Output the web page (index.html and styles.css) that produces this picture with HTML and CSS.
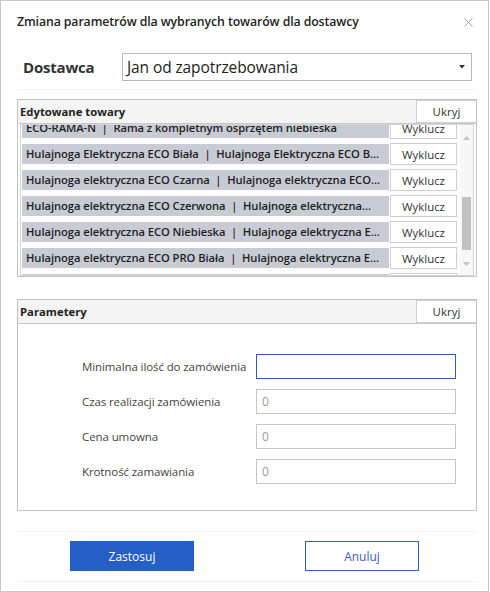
FILE: index.html
```html
<!DOCTYPE html>
<html lang="pl">
<head>
<meta charset="utf-8">
<title>Zmiana parametrów</title>
<link rel="stylesheet" href="styles.css">
</head>
<body>
<div class="dialog">
  <div class="dlg-head">
    <div class="dlg-title">Zmiana parametrów dla wybranych towarów dla dostawcy</div>
    <svg class="close" width="9" height="9" viewBox="0 0 9 9"><path d="M0.5 0.5L8.5 8.5M8.5 0.5L0.5 8.5" stroke="#a0a0a0" stroke-width="1" fill="none"/></svg>
  </div>

  <div class="supplier">
    <div class="supplier-label">Dostawca</div>
    <div class="select">
      <span class="select-text">Jan od zapotrzebowania</span>
      <svg class="caret" width="6" height="4" viewBox="0 0 6 4"><path d="M0 0H6L3 3.5Z" fill="#333"/></svg>
    </div>
  </div>

  <div class="sep sep-top"></div>

  <div class="panel panel-items">
    <div class="panel-head">
      <div class="panel-title">Edytowane towary</div>
      <div class="hide-btn">Ukryj</div>
    </div>
    <div class="panel-body-list">
      <div class="list">
        <div class="rows">
          <div class="rows-inner">
            <div class="row"><div class="row-label">ECO-RAMA-N&nbsp; | &nbsp;Rama z kompletnym osprzętem niebieska</div><div class="row-btn">Wyklucz</div></div>
            <div class="row"><div class="row-label">Hulajnoga Elektryczna ECO Biała&nbsp; | &nbsp;Hulajnoga Elektryczna ECO B...</div><div class="row-btn">Wyklucz</div></div>
            <div class="row"><div class="row-label">Hulajnoga elektryczna ECO Czarna&nbsp; | &nbsp;Hulajnoga elektryczna ECO...</div><div class="row-btn">Wyklucz</div></div>
            <div class="row"><div class="row-label">Hulajnoga elektryczna ECO Czerwona&nbsp; | &nbsp;Hulajnoga elektryczna...</div><div class="row-btn">Wyklucz</div></div>
            <div class="row"><div class="row-label">Hulajnoga elektryczna ECO Niebieska&nbsp; | &nbsp;Hulajnoga elektryczna E...</div><div class="row-btn">Wyklucz</div></div>
            <div class="row"><div class="row-label">Hulajnoga elektryczna ECO PRO Biała&nbsp; | &nbsp;Hulajnoga elektryczna E...</div><div class="row-btn">Wyklucz</div></div>
            <div class="row"><div class="row-label">Hulajnoga elektryczna ECO PRO Czarna&nbsp; | &nbsp;Hulajnoga elektryczna E...</div><div class="row-btn">Wyklucz</div></div>
          </div>
        </div>
        <div class="vscroll">
          <svg class="arrow" width="7" height="4" viewBox="0 0 7 4"><path d="M3.5 0L7 4H0Z" fill="#c4c4c4"/></svg>
          <div class="track"><div class="thumb"></div></div>
          <svg class="arrow" width="7" height="4" viewBox="0 0 7 4"><path d="M0 0H7L3.5 4Z" fill="#c4c4c4"/></svg>
        </div>
      </div>
    </div>
  </div>

  <div class="panel panel-params">
    <div class="panel-head">
      <div class="panel-title">Parametery</div>
      <div class="hide-btn">Ukryj</div>
    </div>
    <div class="params">
      <div class="param"><label class="param-label">Minimalna ilość do zamówienia</label><div class="input input-focus"></div></div>
      <div class="param"><label class="param-label">Czas realizacji zamówienia</label><div class="input"><span class="ph">0</span></div></div>
      <div class="param"><label class="param-label">Cena umowna</label><div class="input"><span class="ph">0</span></div></div>
      <div class="param"><label class="param-label">Krotność zamawiania</label><div class="input"><span class="ph">0</span></div></div>
    </div>
  </div>

  <div class="sep sep-bottom"></div>

  <div class="actions">
    <div class="btn btn-primary">Zastosuj</div>
    <div class="btn btn-secondary">Anuluj</div>
  </div>

  <div class="sep sep-last"></div>
</div>
</body>
</html>
```

FILE: styles.css
```css
* { box-sizing: border-box; }
html, body { margin: 0; padding: 0; background: #ffffff; }
body {
  font-family: "Open Sans", "Noto Sans", "DejaVu Sans", sans-serif;
  color: #333;
  width: 490px;
  height: 592px;
}
.dialog {
  width: 489px;
  height: 592px;
  border: 1px solid #c8c8c8;
  padding: 0 11px 0 16px;
  display: flex;
  flex-direction: column;
}
.dlg-head {
  height: 41px;
  display: flex;
  align-items: center;
  justify-content: space-between;
  padding-right: 4px;
}
.dlg-title {
  font-size: 12.3px;
  font-weight: 600;
  color: #222;
  letter-spacing: -0.1px;
}
.close { margin-top: 2px; }

.supplier {
  display: flex;
  align-items: center;
  margin-top: 11px;
  height: 28px;
}
.supplier-label {
  width: 105px;
  padding-left: 6px;
  font-size: 15px;
  font-weight: 700;
  color: #333;
  letter-spacing: -0.2px;
}
.select {
  width: 350px;
  height: 28px;
  border: 1px solid #b8b8b8;
  display: flex;
  align-items: center;
  justify-content: space-between;
  padding: 0 6px 0 4px;
}
.select-text {
  font-size: 15.5px;
  color: #222;
  letter-spacing: -0.1px;
}

.sep { height: 1px; background: #f2f2f2; width: 460px; }
.sep-top { margin-top: 8px; }

.panel {
  width: 460px;
  border: 1px solid #c2c2c2;
}
.panel-items { margin-top: 9px; height: 178px; }
.panel-head {
  height: 24px;
  background: #f4f4f4;
  border-bottom: 1px solid #c9c9c9;
  display: flex;
  align-items: stretch;
  justify-content: space-between;
}
.panel-title {
  padding-left: 2px;
  font-size: 11.3px;
  font-weight: 700;
  color: #222;
  display: flex;
  align-items: center;
}
.hide-btn {
  width: 60px;
  background: #fff;
  border: 1px solid #cfcfcf;
  border-right: none;
  font-size: 11.5px;
  color: #333;
  display: flex;
  align-items: center;
  justify-content: center;
}

.panel-body-list {
  padding: 0 2px;
  height: 152px;
}
.list {
  height: 152px;
  border: 1px solid #d6d6d6;
  display: flex;
}
.rows {
  flex: 1;
  overflow: hidden;
  padding: 0 3px 0 1px;
}
.rows-inner { margin-top: -8px; }
.row {
  display: flex;
  align-items: center;
  height: 22px;
  margin-bottom: 4px;
  gap: 1px;
}
.row-label {
  flex: 1;
  min-width: 0;
  height: 20px;
  background: #c9cbd4;
  font-size: 11.2px;
  font-weight: 600;
  color: #1e1e1e;
  padding: 0 3px 0 4px;
  line-height: 20px;
  white-space: nowrap;
  overflow: hidden;
  letter-spacing: -0.05px;
}
.row-btn {
  flex: none;
  width: 67px;
  height: 22px;
  border: 1px solid #cfcfcf;
  background: #fff;
  font-size: 11.4px;
  color: #333;
  display: flex;
  align-items: center;
  justify-content: center;
}
.vscroll {
  width: 13px;
  background: #f7f7f7;
  display: flex;
  flex-direction: column;
  align-items: center;
  padding: 11px 0 9px;
}
.arrow { flex: none; }
.track {
  flex: 1;
  width: 100%;
  padding: 0 2px;
  display: flex;
  flex-direction: column;
}
.thumb {
  margin-top: 57px;
  height: 53px;
  background: #c1c1c1;
}

.panel-params { margin-top: 22px; height: 212px; }
.params {
  padding: 30px 0 0 64px;
  display: flex;
  flex-direction: column;
  gap: 10px;
}
.param {
  display: flex;
  align-items: center;
  height: 25px;
}
.param-label {
  width: 174px;
  font-size: 11.5px;
  color: #444;
  letter-spacing: -0.1px;
}
.input {
  width: 200px;
  height: 25px;
  border: 1px solid #c6c6c6;
  padding-left: 5px;
  display: flex;
  align-items: center;
}
.input-focus { border-color: #2c5dc6; }
.ph { font-size: 12px; color: #9a9a9a; }

.sep-bottom { margin-top: 20px; }
.actions {
  display: flex;
  margin-top: 9px;
  padding-left: 53px;
  gap: 111px;
  height: 30px;
}
.btn {
  height: 30px;
  display: flex;
  align-items: center;
  justify-content: center;
  font-size: 12px;
}
.btn-primary {
  width: 124px;
  background: #245ec7;
  color: #fff;
}
.btn-secondary {
  width: 114px;
  border: 1px solid #2d5ec6;
  color: #3f58c2;
  background: #fff;
}
.sep-last { margin-top: 10px; }
```
